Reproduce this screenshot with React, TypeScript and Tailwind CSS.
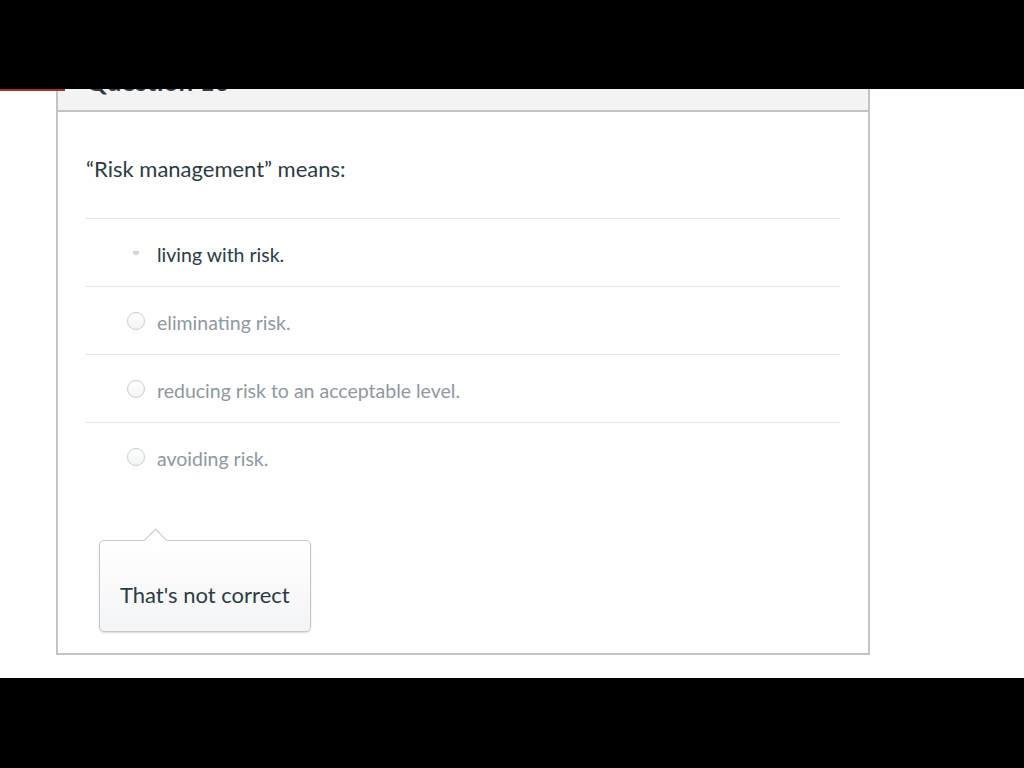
import React from "react";

const options = [
  { text: "living with risk.", selected: true },
  { text: "eliminating risk.", selected: false },
  { text: "reducing risk to an acceptable level.", selected: false },
  { text: "avoiding risk.", selected: false },
];

export default function App() {
  return (
    <div className="w-[1024px] h-[768px] bg-black flex flex-col font-['Lato','Noto_Sans',sans-serif]">
      <div className="h-[89px] bg-black shrink-0" />
      <div className="relative h-[589px] bg-white shrink-0 overflow-hidden">
        <div className="absolute left-0 top-0 w-[65px] h-[2px] bg-[#aa3129]" />
        <div className="ml-[56px] w-[814px] h-[566px] border-x-2 border-b-2 border-[#c3c3c3] flex flex-col">
          <div className="h-[23px] bg-[#f3f3f3] border-b-2 border-[#c3c3c3] overflow-hidden shrink-0">
            <div className="pl-[28px] -mt-[24px] text-[26px] font-bold leading-[32px] text-[#2d3b45]">
              Question 10
            </div>
          </div>
          <div className="px-[28px] pt-[42px] flex flex-col">
            <div className="text-[22px] leading-[30px] text-[#2d3b45]">
              “Risk management” means:
            </div>
            <div className="mt-[34px] border-t border-[#e3e5e6]">
              {options.map((o, i) => (
                <div
                  key={i}
                  className={`h-[68px] flex items-center ${
                    i < options.length - 1 ? "border-b border-[#e3e5e6]" : ""
                  }`}
                >
                  <div className="w-[71px] flex justify-end pr-[12px]">
                    {o.selected ? (
                      <div className="w-[18px] h-[18px] flex items-center justify-center">
                        <div className="w-[6px] h-[4px] rounded-b-full bg-[#d0d4d7]" />
                      </div>
                    ) : (
                      <div className="w-[18px] h-[18px] rounded-full border border-[#c7cdd1] bg-gradient-to-b from-white to-[#f2f3f4]" />
                    )}
                  </div>
                  <div
                    className={`text-[19.5px] leading-[24px] pt-[4px] ${
                      o.selected ? "text-[#2d3b45]" : "text-[#8f989f]"
                    }`}
                  >
                    {o.text}
                  </div>
                </div>
              ))}
            </div>
            <div className="relative ml-[13px] mt-[49px] w-[212px] h-[92px] rounded-[5px] border border-[#c2c8cd] bg-gradient-to-b from-white to-[#f3f4f6] shadow-[0_1px_2px_rgba(0,0,0,0.15)] flex items-center pl-[20px]">
              <div className="absolute left-[47px] -top-[9px] w-[17px] h-[17px] rotate-45 bg-white border-l border-t border-[#c2c8cd]" />
              <span className="relative text-[22px] leading-[28px] text-[#2d3b45] pt-[18px]">
                That's not correct
              </span>
            </div>
          </div>
        </div>
      </div>
      <div className="flex-1 bg-black" />
    </div>
  );
}
